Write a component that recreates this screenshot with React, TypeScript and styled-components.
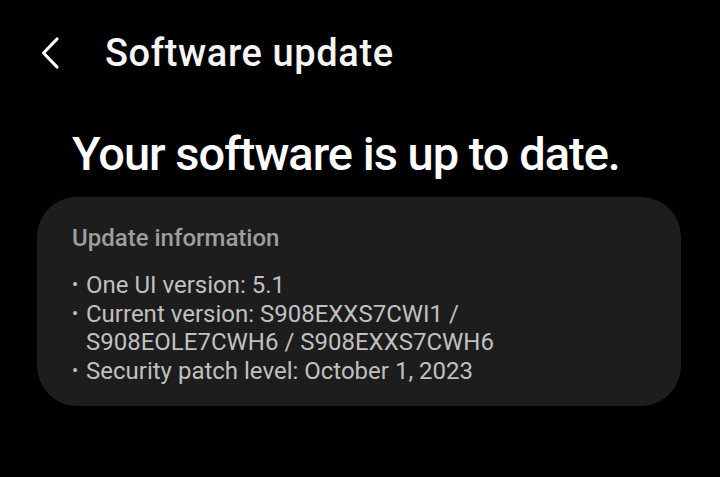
import React from "react";
import styled, { createGlobalStyle } from "styled-components";

const Global = createGlobalStyle`
  html, body { margin: 0; padding: 0; background: #000; }
  body { font-family: Roboto, "Noto Sans", sans-serif; color: #fff; }
`;

const Page = styled.div`
  width: 720px;
  height: 477px;
  background: #000;
  display: flex;
  flex-direction: column;
  overflow: hidden;
`;

const Header = styled.header`
  display: flex;
  align-items: center;
  height: 68px;
  padding: 19px 0 0 40px;
  gap: 43px;
`;

const BackButton = styled.button`
  background: none;
  border: none;
  padding: 0;
  width: 22px;
  height: 34px;
  display: flex;
  align-items: center;
  justify-content: center;
  color: #fff;
`;

const Title = styled.h1`
  margin: 0;
  font-size: 38px;
  font-weight: 500;
  letter-spacing: 0.6px;
  color: #f5f5f5;
`;

const Headline = styled.h2`
  margin: 39px 0 0 72px;
  font-size: 47px;
  font-weight: 500;
  letter-spacing: -1px;
  color: #fff;
  line-height: 56px;
`;

const Card = styled.section`
  margin: 15px 39px 0 37px;
  background: #1d1d1d;
  border-radius: 40px;
  padding: 26px 30px 21px 35px;
`;

const CardTitle = styled.h3`
  margin: 0 0 18px;
  font-size: 24px;
  font-weight: 500;
  color: #9e9e9e;
  line-height: 30px;
`;

const List = styled.ul`
  list-style: none;
  margin: 0;
  padding: 0;
`;

const Item = styled.li`
  display: flex;
  font-size: 24px;
  line-height: 28.5px;
  color: #c0c0c0;
`;

const Bullet = styled.span`
  width: 14px;
  flex: none;
  font-size: 18px;
`;

const ItemText = styled.span`
  max-width: 425px;
`;

const items = [
  "One UI version: 5.1",
  "Current version: S908EXXS7CWI1 / S908EOLE7CWH6 / S908EXXS7CWH6",
  "Security patch level: October 1, 2023",
];

export default function App() {
  return (
    <Page>
      <Global />
      <Header>
        <BackButton aria-label="Back">
          <svg width="22" height="34" viewBox="0 0 22 34">
            <path d="M17 3 L3.5 17 L17 31" fill="none" stroke="#fff" strokeWidth="3.2" strokeLinecap="round" strokeLinejoin="round" />
          </svg>
        </BackButton>
        <Title>Software update</Title>
      </Header>
      <Headline>Your software is up to date.</Headline>
      <Card>
        <CardTitle>Update information</CardTitle>
        <List>
          {items.map((t) => (
            <Item key={t}>
              <Bullet>•</Bullet>
              <ItemText>{t}</ItemText>
            </Item>
          ))}
        </List>
      </Card>
    </Page>
  );
}
